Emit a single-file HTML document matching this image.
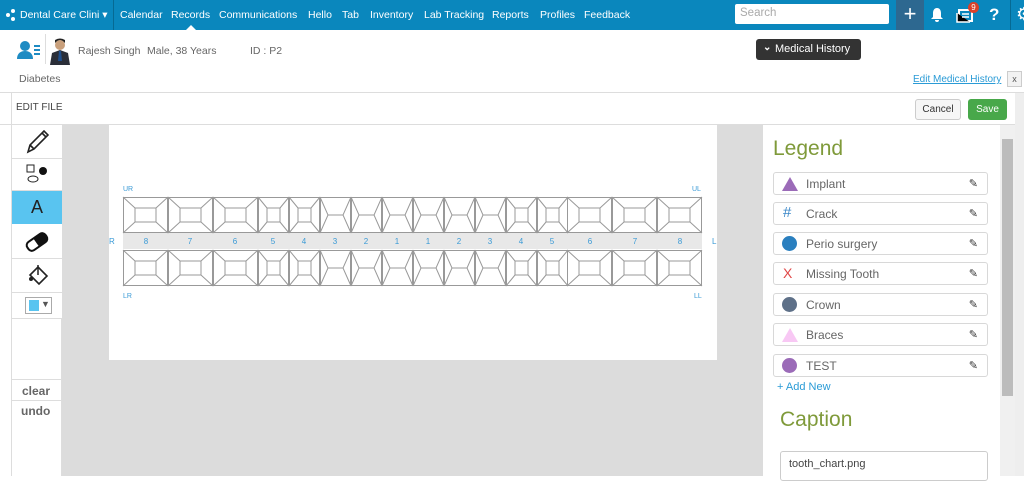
<!DOCTYPE html>
<html><head><meta charset="utf-8"><style>
*{box-sizing:border-box;margin:0;padding:0}
body{width:1024px;height:476px;overflow:hidden;background:#fff;font-family:"Liberation Sans",sans-serif;position:relative;font-size:12px;color:#555}
.a{position:absolute}
.nav{left:0;top:0;width:1024px;height:30px;background:#0a87bd}
.nav span{position:absolute;top:9px;color:#fff;font-size:10.5px}
.leg{left:773px;width:215px;height:23px;border:1px solid #d8d8d8;border-radius:3px;background:#fff}
.leg .t{position:absolute;left:32px;top:4px;font-size:12px;color:#666}
.leg .p{position:absolute;right:9px;top:4px;font-size:11px;color:#333}
.tb{left:12px;width:50px;border-bottom:1px solid #ddd;background:#fff}
</style></head><body>
<div class="a nav"></div>
<svg class="a" style="left:5px;top:8px" width="12" height="14"><circle cx="3" cy="7" r="2" fill="#fff"/><circle cx="8" cy="3" r="2" fill="#fff"/><circle cx="8" cy="11" r="2" fill="#fff"/></svg>
<span class="a" style="left:20px;top:9px;color:#fff;font-size:10.5px">Dental Care Clini ▾</span>
<div class="a" style="left:113px;top:0;width:1px;height:30px;background:#066a93"></div>
<div class="nav a" style="background:none;height:30px">
<span style="left:120px">Calendar</span><span style="left:171px">Records</span><span style="left:219px">Communications</span><span style="left:308px">Hello</span><span style="left:342px">Tab</span><span style="left:370px">Inventory</span><span style="left:424px">Lab Tracking</span><span style="left:492px">Reports</span><span style="left:540px">Profiles</span><span style="left:584px">Feedback</span>
</div>
<div class="a" style="left:186px;top:25px;width:0;height:0;border:5px solid transparent;border-bottom-color:#fff;border-top:0"></div>
<div class="a" style="left:735px;top:4px;width:154px;height:20px;background:#fff;border-radius:2px;color:#aaa;padding:3px 5px;font-size:11.5px">Search</div>
<div class="a" style="left:896px;top:0;width:28px;height:30px;background:#2d6890;color:#fff;font-size:22px;text-align:center;line-height:28px">+</div>
<svg class="a" style="left:930px;top:7px" width="14" height="16"><path d="M7 1c-3 0-4 3-4 5v4l-2 2h12l-2-2V6c0-2-1-5-4-5zM5 13a2 2 0 0 0 4 0z" fill="#fff"/></svg>
<svg class="a" style="left:956px;top:8px" width="18" height="15"><rect x="3" y="2" width="13" height="11" fill="none" stroke="#fff" stroke-width="2"/><path d="M1 5v9h13M6 6h7M6 9h7" stroke="#fff" stroke-width="1.5"/></svg>
<div class="a" style="left:968px;top:2px;width:11px;height:11px;border-radius:6px;background:#d9412b;color:#fff;font-size:8px;text-align:center;line-height:11px">9</div>
<span class="a" style="left:989px;top:5px;color:#fff;font-size:17px;font-weight:bold">?</span>
<div class="a" style="left:1010px;top:0;width:1px;height:30px;background:#066a93"></div>
<span class="a" style="left:1016px;top:4px;color:#fff;font-size:18px">⚙</span>

<svg class="a" style="left:17px;top:40px" width="24" height="20"><circle cx="8" cy="6" r="5" fill="#1e8bc3"/><path d="M0 19c0-6 4-8 8-8s8 2 8 8z" fill="#1e8bc3"/><path d="M17 6h6M17 10h6M17 14h6" stroke="#1e8bc3" stroke-width="2"/></svg>
<div class="a" style="left:45px;top:34px;width:1px;height:30px;background:#ddd"></div>
<svg class="a" style="left:50px;top:38px" width="20" height="27"><circle cx="10" cy="7" r="5" fill="#c9a07c"/><path d="M5 5q5-6 10 0v-3q-5-3-10 0z" fill="#222"/><path d="M0 27l2-12 8-3 8 3 2 12z" fill="#2a2e38"/><path d="M9 13h2l1 10h-4z" fill="#1e4e8c"/></svg>
<span class="a" style="left:78px;top:45px;color:#666;font-size:10.5px">Rajesh Singh</span>
<span class="a" style="left:147px;top:45px;color:#666;font-size:10.5px">Male, 38 Years</span>
<span class="a" style="left:250px;top:45px;color:#666;font-size:10.5px">ID : P2</span>
<div class="a" style="left:756px;top:39px;width:105px;height:21px;background:#333;border-radius:3px;color:#fff;font-size:11px;padding:4px 0 0 19px">Medical History</div>
<span class="a" style="left:763px;top:42px;color:#fff;font-size:10px;font-weight:bold">⌄</span>
<span class="a" style="left:19px;top:73px;color:#666;font-size:10.5px">Diabetes</span>
<span class="a" style="left:913px;top:74px;color:#2a9bd6;font-size:10px;text-decoration:underline">Edit Medical History</span>
<div class="a" style="left:1007px;top:71px;width:15px;height:16px;border:1px solid #ccc;background:#f2f2f2;font-size:9px;text-align:center;line-height:14px">x</div>

<div class="a" style="left:0;top:92px;width:1024px;height:1px;background:#ddd"></div>
<div class="a" style="left:11px;top:93px;width:1px;height:383px;background:#ddd"></div>
<span class="a" style="left:16px;top:102px;color:#444;font-size:10px">EDIT FILE</span>
<div class="a" style="left:915px;top:99px;width:46px;height:21px;border:1px solid #ccc;border-radius:3px;background:#f6f6f6;font-size:10px;text-align:center;line-height:19px;color:#333">Cancel</div>
<div class="a" style="left:968px;top:99px;width:39px;height:21px;border-radius:3px;background:#48a84a;font-size:10px;text-align:center;line-height:21px;color:#fff">Save</div>
<div class="a" style="left:1015px;top:93px;width:9px;height:383px;background:#eee"></div>
<div class="a" style="left:0;top:124px;width:1015px;height:1px;background:#ddd"></div>

<div class="a" style="left:62px;top:125px;width:701px;height:351px;background:#dcdcdc"></div>
<div class="a" style="left:12px;top:125px;width:50px;height:351px;background:#fff;border-right:1px solid #ddd"></div>
<div class="a tb" style="top:125px;height:34px"></div>
<svg class="a" style="left:25px;top:129px" width="24" height="26"><path d="M3 23l2-7L19 2l4 4L9 20z M5 16l4 4 M17 4l4 4" fill="none" stroke="#222" stroke-width="1.6"/></svg>
<div class="a tb" style="top:159px;height:32px"></div>
<svg class="a" style="left:26px;top:164px" width="24" height="22"><rect x="1" y="1" width="7" height="7" fill="none" stroke="#222"/><circle cx="17" cy="7" r="4" fill="#111"/><ellipse cx="7" cy="15" rx="5" ry="3" fill="none" stroke="#222"/></svg>
<div class="a" style="left:12px;top:191px;width:50px;height:33px;background:#59c4f0;color:#222;font-size:18px;text-align:center;line-height:32px">A</div>
<div class="a tb" style="top:224px;height:35px"></div>
<svg class="a" style="left:25px;top:231px" width="24" height="22"><g transform="rotate(-35 12 11)"><rect x="1" y="6" width="22" height="10" rx="4" fill="#fff" stroke="#111" stroke-width="2"/><path d="M11 6h8a4 4 0 0 1 4 4v2a4 4 0 0 1-4 4h-8z" fill="#111"/></g></svg>
<div class="a tb" style="top:259px;height:34px"></div>
<svg class="a" style="left:26px;top:264px" width="24" height="24"><path d="M12 3l9 9-8 8-9-9z" fill="none" stroke="#222" stroke-width="1.6"/><path d="M12 1v10" stroke="#222" stroke-width="1.5"/><circle cx="5" cy="15" r="2" fill="#222"/></svg>
<div class="a tb" style="top:293px;height:26px"></div>
<div class="a" style="left:25px;top:297px;width:27px;height:17px;border:1px solid #aaa;background:#fff"></div>
<div class="a" style="left:29px;top:300px;width:10px;height:11px;background:#59c4f0"></div>
<span class="a" style="left:41px;top:299px;font-size:9px;color:#555">▼</span>
<div class="a" style="left:12px;top:379px;width:50px;height:1px;background:#ddd"></div>
<div class="a" style="left:12px;top:400px;width:50px;height:1px;background:#ddd"></div>
<span class="a" style="left:22px;top:384px;font-size:12px;font-weight:bold;color:#666">clear</span>
<span class="a" style="left:21px;top:404px;font-size:12px;font-weight:bold;color:#666">undo</span>

<div class="a" style="left:109px;top:125px;width:608px;height:235px;background:#fff"></div>
<svg class="a" style="left:100px;top:180px" width="625" height="120" font-family="Liberation Sans" font-size="8" fill="#3a9ad6">
<defs>
<g id="m" fill="none" stroke="#999" stroke-width="1"><rect x=".5" y=".5" width="44" height="35"/><rect x="12" y="11" width="21" height="14"/><path d="M0 0l12 11M45 0L33 11M0 36l12-11M45 36L33 25"/></g>
<g id="p" fill="none" stroke="#999"><rect x=".5" y=".5" width="30" height="35"/><rect x="9" y="11" width="13" height="14"/><path d="M0 0l9 11M31 0L22 11M0 36l9-11M31 36L22 25"/></g>
<g id="i" fill="none" stroke="#999"><rect x=".5" y=".5" width="30" height="35"/><path d="M0 0l8 18-8 18M31 0l-8 18 8 18M8 18h15"/></g>
</defs>
<rect x="23" y="53" width="579" height="16" fill="#e8e8e8"/>
<g transform="translate(0,17)">
<use href="#m" x="23"/><use href="#m" x="68"/><use href="#m" x="113"/><use href="#p" x="158"/><use href="#p" x="189"/><use href="#i" x="220"/><use href="#i" x="251"/><use href="#i" x="282"/><use href="#i" x="313"/><use href="#i" x="344"/><use href="#i" x="375"/><use href="#p" x="406"/><use href="#p" x="437"/><use href="#m" x="467"/><use href="#m" x="512"/><use href="#m" x="557"/>
</g>
<g transform="translate(0,70)">
<use href="#m" x="23"/><use href="#m" x="68"/><use href="#m" x="113"/><use href="#p" x="158"/><use href="#p" x="189"/><use href="#i" x="220"/><use href="#i" x="251"/><use href="#i" x="282"/><use href="#i" x="313"/><use href="#i" x="344"/><use href="#i" x="375"/><use href="#p" x="406"/><use href="#p" x="437"/><use href="#m" x="467"/><use href="#m" x="512"/><use href="#m" x="557"/>
</g>
<g font-size="7"><text x="23" y="11">UR</text><text x="592" y="11">UL</text><text x="23" y="118">LR</text><text x="594" y="118">LL</text></g>
<text x="9" y="64">R</text><text x="612" y="64">L</text>
<g text-anchor="middle"><text x="46" y="64">8</text><text x="90" y="64">7</text><text x="135" y="64">6</text><text x="173" y="64">5</text><text x="204" y="64">4</text><text x="235" y="64">3</text><text x="266" y="64">2</text><text x="297" y="64">1</text><text x="328" y="64">1</text><text x="359" y="64">2</text><text x="390" y="64">3</text><text x="421" y="64">4</text><text x="452" y="64">5</text><text x="490" y="64">6</text><text x="535" y="64">7</text><text x="580" y="64">8</text></g>
</svg>

<div class="a" style="left:763px;top:125px;width:237px;height:351px;background:#fff"></div>
<div class="a" style="left:1000px;top:125px;width:15px;height:351px;background:#f0f0f0"></div>
<div class="a" style="left:1002px;top:139px;width:11px;height:257px;background:#bcbcbc"></div>
<span class="a" style="left:773px;top:137px;font-size:21px;color:#7f9a3a">Legend</span>
<div class="a leg" style="top:172px"><svg class="a" style="left:8px;top:4px" width="16" height="14"><path d="M8 0l8 14H0z" fill="#9b6bb8"/></svg><span class="t">Implant</span><span class="p">✎</span></div>
<div class="a leg" style="top:202px"><span class="a" style="left:9px;top:1px;font-size:15px;color:#3a87c8">#</span><span class="t">Crack</span><span class="p">✎</span></div>
<div class="a leg" style="top:232px"><div class="a" style="left:8px;top:3px;width:15px;height:15px;border-radius:8px;background:#2a7fbf"></div><span class="t">Perio surgery</span><span class="p">✎</span></div>
<div class="a leg" style="top:262px"><span class="a" style="left:9px;top:2px;font-size:14px;color:#e04848">X</span><span class="t">Missing Tooth</span><span class="p">✎</span></div>
<div class="a leg" style="top:293px"><div class="a" style="left:8px;top:3px;width:15px;height:15px;border-radius:8px;background:#5e7088"></div><span class="t">Crown</span><span class="p">✎</span></div>
<div class="a leg" style="top:323px"><svg class="a" style="left:8px;top:4px" width="16" height="14"><path d="M8 0l8 14H0z" fill="#f8c8f4"/></svg><span class="t">Braces</span><span class="p">✎</span></div>
<div class="a leg" style="top:354px"><div class="a" style="left:8px;top:3px;width:15px;height:15px;border-radius:8px;background:#9b6bb8"></div><span class="t">TEST</span><span class="p">✎</span></div>
<span class="a" style="left:777px;top:381px;font-size:11px;color:#2a9bd6">+ Add New</span>
<span class="a" style="left:780px;top:408px;font-size:21px;color:#7f9a3a">Caption</span>
<div class="a" style="left:780px;top:451px;width:208px;height:30px;border:1px solid #ccc;border-radius:3px;padding:6px 8px;font-size:11px;color:#444">tooth_chart.png</div>
</body></html>
